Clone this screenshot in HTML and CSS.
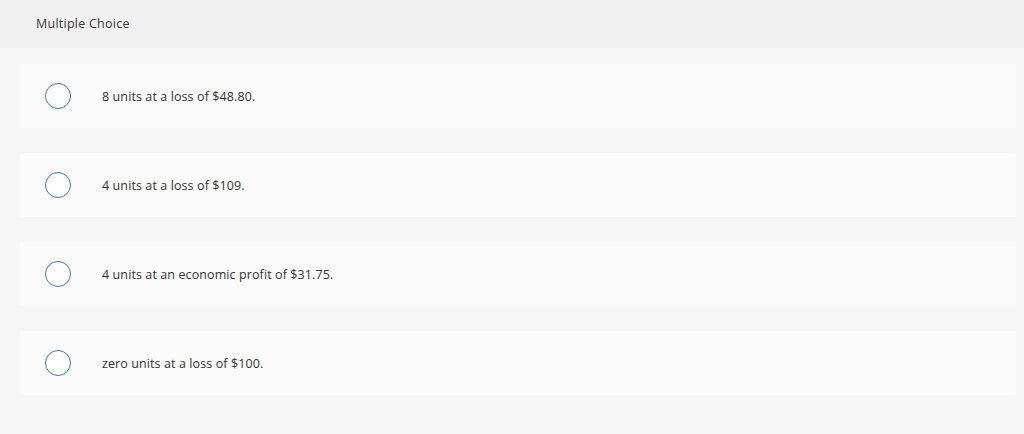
FILE: index.html
```html
<!DOCTYPE html>
<html>
<head>
<meta charset="utf-8">
<link rel="stylesheet" href="styles.css">
</head>
<body>
<div class="header">Multiple Choice</div>
<div class="choices">
  <div class="choice"><span class="radio"></span><span class="label">8 units at a loss of $48.80.</span></div>
  <div class="choice"><span class="radio"></span><span class="label">4 units at a loss of $109.</span></div>
  <div class="choice"><span class="radio"></span><span class="label">4 units at an economic profit of $31.75.</span></div>
  <div class="choice"><span class="radio"></span><span class="label">zero units at a loss of $100.</span></div>
</div>
</body>
</html>
```
FILE: styles.css
```css
html, body {
  margin: 0;
  padding: 0;
  background: #f6f6f6;
  font-family: "Open Sans", "Lato", sans-serif;
  color: #333;
}
body {
  width: 1024px;
  height: 434px;
  overflow: hidden;
}
.header {
  height: 48px;
  background: #f0f0f0;
  box-sizing: border-box;
  padding: 16px 0 0 36px;
  font-size: 12.5px;
  line-height: 16px;
  letter-spacing: 0.25px;
  color: #3a3a3a;
}
.choices {
  display: flex;
  flex-direction: column;
  gap: 25px;
  padding: 16px 8px 0 20px;
}
.choice {
  height: 64px;
  background: #fbfbfb;
  border-radius: 2px;
  display: flex;
  align-items: center;
  padding-left: 25px;
}
.radio {
  width: 24px;
  height: 24px;
  border: 1.5px solid #3d78b5;
  border-radius: 50%;
  background: #fff;
  flex: none;
}
.label {
  margin-left: 31px;
  font-size: 12.5px;
  letter-spacing: 0.1px;
  color: #333;
}
```
